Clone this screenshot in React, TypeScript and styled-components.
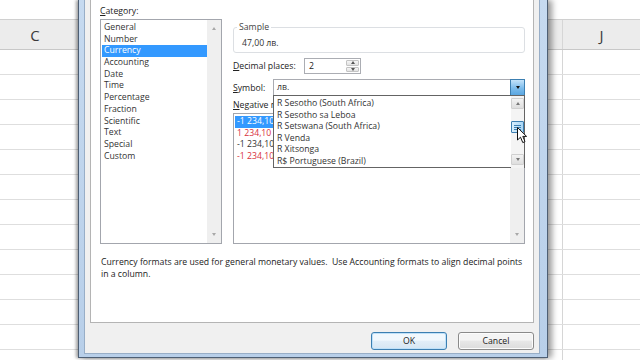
import React from 'react'
import styled, { createGlobalStyle } from 'styled-components'

const GlobalStyle = createGlobalStyle`
  html, body { margin: 0; padding: 0; background: #fff; }
  body { width: 640px; height: 360px; overflow: hidden; }
`

const Screen = styled.div`
  position: relative;
  width: 640px;
  height: 360px;
  overflow: hidden;
  font-family: "Open Sans", "Noto Sans", sans-serif;
  font-size: 8.7px;
  color: #222;
`

// spreadsheet behind the dialog
const Sheet = styled.div`
  display: flex;
  flex-direction: column;
  height: 100%;
`

const SheetTop = styled.div`
  height: 20px;
  flex: none;
  background: #fff;
  border-bottom: 1px solid #d0d0d0;
  box-sizing: border-box;
`

const SheetRow = styled.div<{ $header?: boolean }>`
  display: grid;
  grid-template-columns: 70px 1fr 78px;
  flex: none;
  height: ${p => (p.$header ? 30 : 25)}px;
  box-sizing: border-box;
  border-bottom: 1px solid ${p => (p.$header ? '#c8c8c8' : '#dedede')};
  background: ${p => (p.$header ? '#ececec' : '#fff')};
`

const SheetCell = styled.div<{ $edge?: boolean }>`
  display: flex;
  align-items: center;
  justify-content: center;
  border-left: ${p => (p.$edge ? '1px solid #d6d6d6' : 'none')};
  font-size: 15px;
  color: #3a3a3a;
`

// dialog
const Dialog = styled.div`
  position: absolute;
  left: 78px;
  top: 0;
  width: 470px;
  height: 358px;
  box-sizing: border-box;
  display: flex;
  flex-direction: column;
  border: 1px solid #4e5f74;
  border-top: none;
  padding: 0 7px 3px 5px;
  background: linear-gradient(180deg, #c6daf0, #b8cfe9);
  box-shadow: 4px 0 6px rgba(0, 0, 0, 0.4), -2px 0 3px rgba(0, 0, 0, 0.35);
`

const Client = styled.div`
  flex: 1;
  display: flex;
  flex-direction: column;
  background: #f0f0f0;
  border: 1px solid #98aec7;
  border-top: none;
`

const Panel = styled.div`
  margin: 0 5px;
  height: 323px;
  flex: none;
  box-sizing: border-box;
  background: #fff;
  border: 1px solid #b4b4b4;
  border-top: none;
  padding: 5px 8px 0 9px;
  display: flex;
  flex-direction: column;
`

const Columns = styled.div`
  display: grid;
  grid-template-columns: 122px 292px;
  column-gap: 11px;
`

const Column = styled.div`
  display: flex;
  flex-direction: column;
`

const Label = styled.div<{ $clip?: number }>`
  line-height: 12px;
  height: 12px;
  white-space: nowrap;
  color: #222;
  ${p => (p.$clip ? `width: ${p.$clip}px; overflow: hidden;` : '')}
`

const ListBox = styled.div<{ $top: number; $height: number }>`
  margin-top: ${p => p.$top}px;
  height: ${p => p.$height}px;
  box-sizing: border-box;
  border: 1px solid #a3a6ad;
  display: grid;
  grid-template-columns: 1fr 14px;
  background: #fff;
`

const Items = styled.div`
  padding-top: 2px;
  display: flex;
  flex-direction: column;
  align-items: stretch;
`

const Item = styled.div<{ $selected?: boolean; $red?: boolean; $fit?: boolean }>`
  line-height: 11.7px;
  height: 11.7px;
  margin-left: 1px;
  padding: 0 2px;
  white-space: nowrap;
  align-self: ${p => (p.$fit ? 'flex-start' : 'stretch')};
  background: ${p => (p.$selected ? '#3399ff' : 'transparent')};
  color: ${p => (p.$selected ? '#fff' : p.$red ? '#d8303c' : '#333')};
`

const ScrollTrack = styled.div`
  background: #efefef;
  display: flex;
  flex-direction: column;
  justify-content: space-between;
  align-items: center;
  padding: 7px 0 7px;
`

const Arrow = styled.span<{ $dir: 'up' | 'down'; $color?: string }>`
  width: 0;
  height: 0;
  border-left: 2.5px solid transparent;
  border-right: 2.5px solid transparent;
  ${p =>
    p.$dir === 'up'
      ? `border-bottom: 3px solid ${p.$color || '#a8a8a8'};`
      : `border-top: 3px solid ${p.$color || '#a8a8a8'};`}
`

const SampleBox = styled.fieldset`
  margin: 17px 0 0;
  padding: 5px 0 3px 3px;
  border: 1px solid #dcdfe3;
  border-radius: 3px;
  min-width: 0;
  legend {
    padding: 0 2px;
    line-height: 10px;
    color: #444;
  }
`

const SampleValue = styled.div`
  padding-left: 5px;
  line-height: 12px;
  color: #333;
`

const FieldRow = styled.div<{ $top: number; $height: number; $label: number }>`
  margin-top: ${p => p.$top}px;
  height: ${p => p.$height}px;
  display: grid;
  grid-template-columns: ${p => p.$label}px auto;
  align-items: center;
  position: relative;
`

const SpinBox = styled.div`
  width: 57px;
  height: 16px;
  box-sizing: border-box;
  border: 1px solid #abadb3;
  display: grid;
  grid-template-columns: 1fr 14px;
  background: #fff;
`

const SpinText = styled.div`
  padding-left: 4px;
  line-height: 14px;
`

const SpinButtons = styled.div`
  display: grid;
  grid-template-rows: 1fr 1fr;
  gap: 1px;
  padding: 1px 1px 1px 0;
`

const SpinButton = styled.div`
  display: flex;
  align-items: center;
  justify-content: center;
  border: 1px solid #c4c4c4;
  border-radius: 1px;
  background: linear-gradient(#f6f6f6, #e2e2e2);
`

const Combo = styled.div`
  position: relative;
  height: 17px;
  box-sizing: border-box;
  border: 1px solid #a9abb1;
  display: grid;
  grid-template-columns: 1fr 14px;
  background: #fff;
`

const ComboText = styled.div`
  padding-left: 3px;
  line-height: 15px;
  color: #333;
`

const ComboButton = styled.div`
  margin: -1px -1px -1px 0;
  display: flex;
  align-items: center;
  justify-content: center;
  border: 1px solid #3c7fb1;
  background: linear-gradient(#c4e3fa, #7cbcec 55%, #5aa6e0);
`

const Popup = styled.div`
  position: absolute;
  left: -1px;
  right: -1px;
  top: 15px;
  height: 73px;
  box-sizing: border-box;
  border: 1px solid #646464;
  background: #fff;
  display: grid;
  grid-template-columns: 1fr 13px;
  z-index: 2;
`

const PopupItems = styled.div`
  padding-top: 2px;
  display: flex;
  flex-direction: column;
`

const PopupItem = styled.div`
  line-height: 11.6px;
  height: 11.6px;
  padding-left: 3px;
  white-space: nowrap;
  color: #333;
`

const PopupScroll = styled.div`
  background: #f4f4f4;
  display: flex;
  flex-direction: column;
  padding: 2px 0 3px;
`

const ScrollButton = styled.div`
  height: 11px;
  box-sizing: border-box;
  display: flex;
  align-items: center;
  justify-content: center;
  border: 1px solid #d0d0d0;
  border-radius: 1px;
  background: linear-gradient(#f3f3f3, #dedede);
`

const Thumb = styled.div`
  margin-top: 12px;
  height: 12px;
  box-sizing: border-box;
  border: 1px solid #3c7fb1;
  border-radius: 1px;
  background: linear-gradient(90deg, #d8eefc, #a9d6f5);
  display: flex;
  flex-direction: column;
  justify-content: center;
  gap: 1px;
  padding: 0 2px;
  span {
    height: 1px;
    background: #3c7fb1;
  }
`

const Spacer = styled.div`
  flex: 1;
`

const Description = styled.div`
  margin-top: 13px;
  padding-left: 1px;
  line-height: 11.5px;
  white-space: nowrap;
  color: #222;
`

const ButtonBar = styled.div`
  flex: 1;
  display: flex;
  justify-content: flex-end;
  align-items: flex-start;
  gap: 11px;
  padding: 9px 5px 0 0;
`

const Button = styled.div<{ $default?: boolean }>`
  width: 76px;
  height: 18px;
  box-sizing: border-box;
  display: flex;
  align-items: center;
  justify-content: center;
  border: 1px solid ${p => (p.$default ? '#3c7fb1' : '#8a8a8a')};
  border-radius: 3px;
  background: ${p =>
    p.$default
      ? 'linear-gradient(#f1f8fd 45%, #e2eef8 50%, #d6e6f3)'
      : 'linear-gradient(#f4f4f4 45%, #e8e8e8 50%, #dcdcdc)'};
  box-shadow: inset 0 0 0 1px ${p => (p.$default ? '#bfe1f9' : '#fcfcfc')};
  color: #222;
`

const Cursor = styled.svg`
  position: absolute;
  left: 517px;
  top: 127px;
  z-index: 3;
`

const categories = [
  'General', 'Number', 'Currency', 'Accounting', 'Date', 'Time',
  'Percentage', 'Fraction', 'Scientific', 'Text', 'Special', 'Custom',
]

const negatives = [
  { text: '-1 234,10', red: false, selected: true },
  { text: '1 234,10', red: true },
  { text: '-1 234,10', red: false },
  { text: '-1 234,10', red: true },
]

const symbols = [
  'R Sesotho (South Africa)',
  'R Sesotho sa Leboa',
  'R Setswana (South Africa)',
  'R Venda',
  'R Xitsonga',
  'R$ Portuguese (Brazil)',
]

const Scrollbar = () => (
  <ScrollTrack>
    <Arrow $dir="up" />
    <Arrow $dir="down" />
  </ScrollTrack>
)

export default function App() {
  const rows = Array.from({ length: 13 }, (_, i) => i)
  return (
    <Screen>
      <GlobalStyle />
      <Sheet>
        <SheetTop />
        <SheetRow $header>
          <SheetCell>C</SheetCell>
          <SheetCell />
          <SheetCell $edge>J</SheetCell>
        </SheetRow>
        {rows.map(r => (
          <SheetRow key={r}>
            <SheetCell />
            <SheetCell />
            <SheetCell $edge />
          </SheetRow>
        ))}
      </Sheet>

      <Dialog>
        <Client>
          <Panel>
            <Columns>
              <Column>
                <Label><u>C</u>ategory:</Label>
                <ListBox $top={2} $height={225}>
                  <Items>
                    {categories.map(c => (
                      <Item key={c} $selected={c === 'Currency'}>{c}</Item>
                    ))}
                  </Items>
                  <Scrollbar />
                </ListBox>
              </Column>

              <Column>
                <SampleBox>
                  <legend>Sample</legend>
                  <SampleValue>47,00 лв.</SampleValue>
                </SampleBox>

                <FieldRow $top={5} $height={16} $label={71}>
                  <Label><u>D</u>ecimal places:</Label>
                  <SpinBox>
                    <SpinText>2</SpinText>
                    <SpinButtons>
                      <SpinButton><Arrow $dir="up" $color="#555" /></SpinButton>
                      <SpinButton><Arrow $dir="down" $color="#555" /></SpinButton>
                    </SpinButtons>
                  </SpinBox>
                </FieldRow>

                <FieldRow $top={5} $height={17} $label={40}>
                  <Label><u>S</u>ymbol:</Label>
                  <Combo>
                    <ComboText>лв.</ComboText>
                    <ComboButton><Arrow $dir="down" $color="#111" /></ComboButton>
                    <Popup>
                      <PopupItems>
                        {symbols.map(s => <PopupItem key={s}>{s}</PopupItem>)}
                      </PopupItems>
                      <PopupScroll>
                        <ScrollButton><Arrow $dir="up" $color="#777" /></ScrollButton>
                        <Thumb><span /><span /><span /></Thumb>
                        <Spacer />
                        <ScrollButton><Arrow $dir="down" $color="#777" /></ScrollButton>
                      </PopupScroll>
                    </Popup>
                  </Combo>
                </FieldRow>

                <FieldRow $top={3} $height={12} $label={292}>
                  <Label $clip={40}><u>N</u>egative numbers:</Label>
                </FieldRow>
                <ListBox $top={2} $height={131}>
                  <Items>
                    {negatives.map((n, i) => (
                      <Item key={i} $fit $red={n.red} $selected={n.selected}>{n.text}</Item>
                    ))}
                  </Items>
                  <Scrollbar />
                </ListBox>
              </Column>
            </Columns>

            <Description>
              Currency formats are used for general monetary values.&nbsp; Use Accounting formats to align decimal points
              <br />
              in a column.
            </Description>
          </Panel>

          <ButtonBar>
            <Button $default>OK</Button>
            <Button>Cancel</Button>
          </ButtonBar>
        </Client>
      </Dialog>

      <Cursor width="11" height="17" viewBox="0 0 11 17">
        <path d="M0.5 0.5 L0.5 13 L3.5 10.2 L5.8 15.6 L8 14.6 L5.8 9.4 L9.6 9.4 Z" fill="#fff" stroke="#111" strokeWidth="1" />
      </Cursor>
    </Screen>
  )
}
